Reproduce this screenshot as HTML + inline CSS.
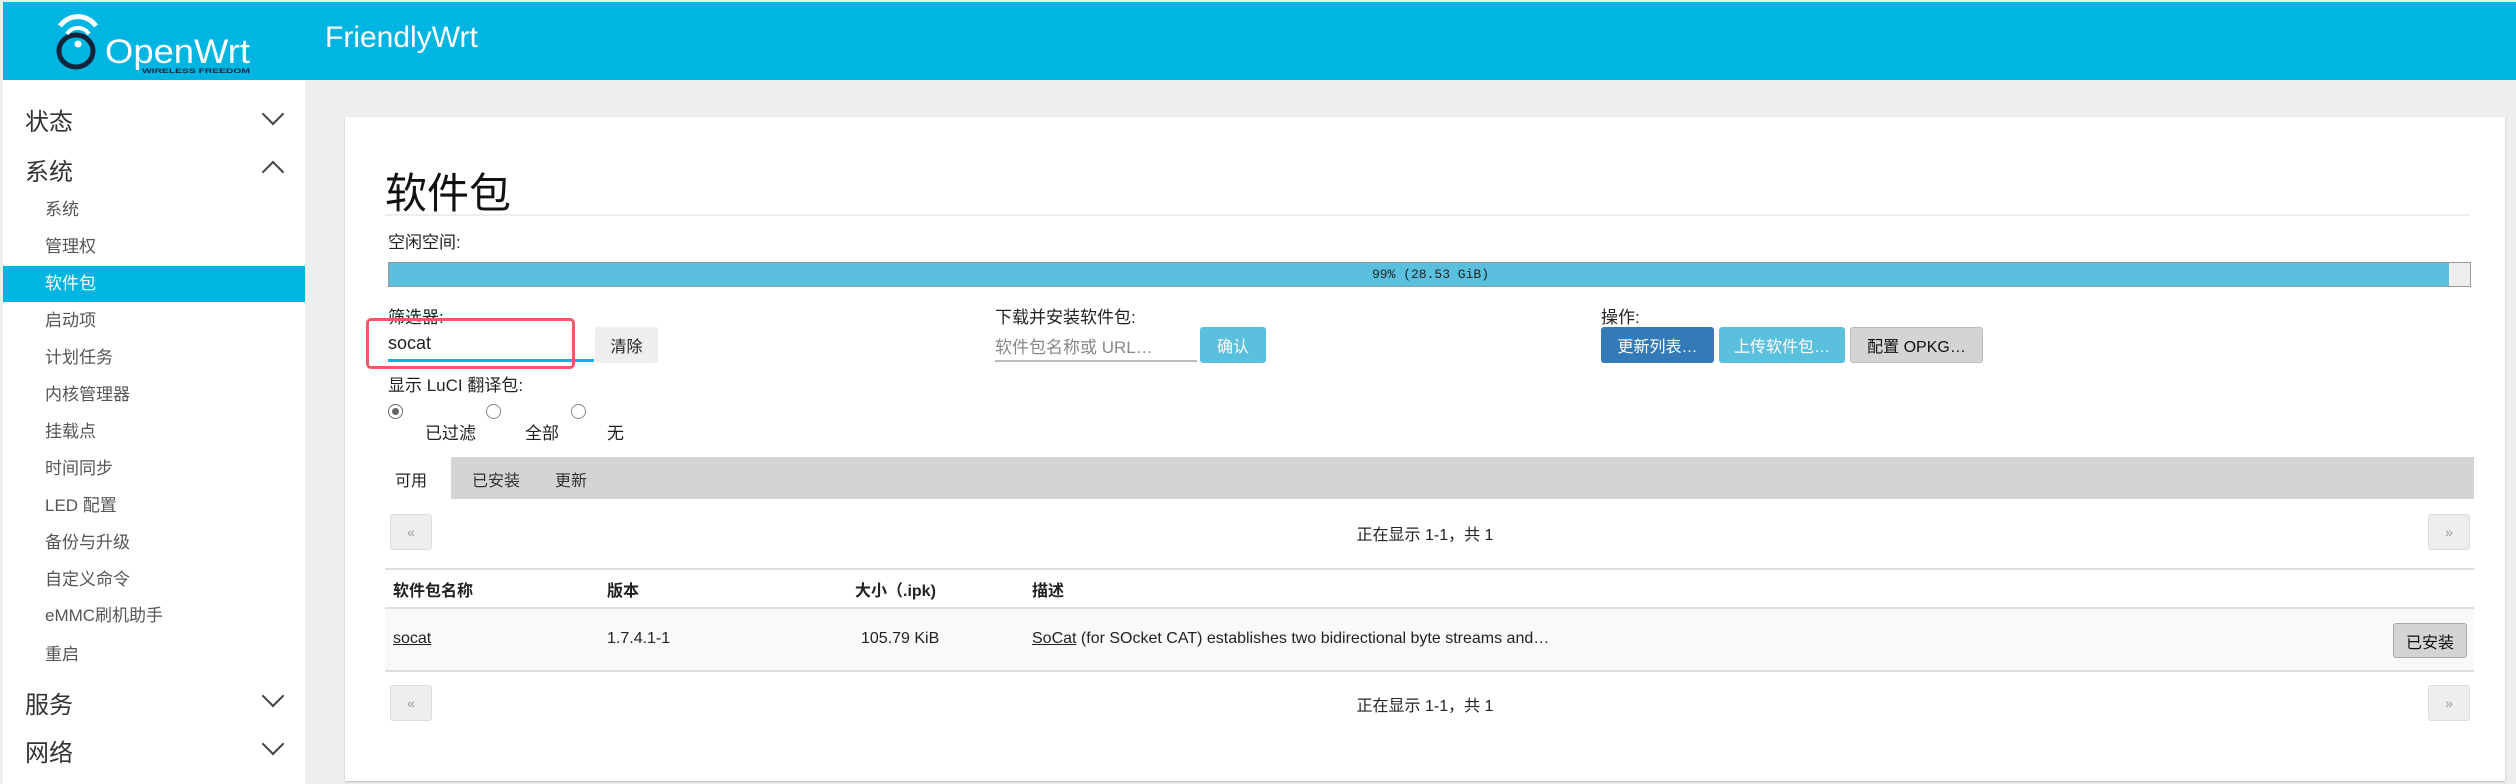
<!DOCTYPE html>
<html><head><meta charset="utf-8"><style>
*{box-sizing:border-box;margin:0;padding:0}
body{width:2516px;height:784px;overflow:hidden;background:#eeeeee;font-family:"Liberation Sans","Noto Sans CJK SC",sans-serif;color:#222;position:relative;font-size:17px}
.abs{position:absolute}
#hdr{left:3px;top:2px;width:2513px;height:78px;background:#00b5e2}
#side{left:3px;top:80px;width:302px;height:704px;background:#fff}
.m{position:absolute;left:22px;font-size:24px;color:#333}
.chev{position:absolute;left:262px;width:16px;height:16px;border-right:2px solid #444;border-bottom:2px solid #444}
.s{position:absolute;left:42px;font-size:17px;color:#555;line-height:20px}
#card{left:345px;top:117px;width:2160px;height:664px;background:#fff;box-shadow:0 1px 2px #bbb}
.lbl{position:absolute;font-size:17px;color:#222}
.btn{position:absolute;font-size:16px;display:flex;align-items:center;justify-content:center;border-radius:3px}
.pg{position:absolute;width:42px;height:36px;background:#eee;border:1px solid #ddd;border-radius:3px;color:#999;font-size:14px;display:flex;align-items:center;justify-content:center}
.radio{position:absolute;width:15px;height:15px;border:1px solid #888;border-radius:50%;background:#fff}
</style></head><body>
<div id="hdr" class="abs">
<svg class="abs" style="left:-3px;top:-2px" width="270" height="80" viewBox="0 0 270 80">
<ellipse cx="76" cy="51" rx="17" ry="16" fill="none" stroke="#13233a" stroke-width="5"/>
<path d="M60 26 A22 22 0 0 1 96 26" fill="none" stroke="#fff" stroke-width="5"/>
<path d="M67 34 A13 13 0 0 1 89 34" fill="none" stroke="#fff" stroke-width="4"/>
<circle cx="78" cy="44" r="3.5" fill="#fff"/>
<text x="105" y="63" font-family="Liberation Sans" font-size="34" fill="#fff" textLength="145" lengthAdjust="spacingAndGlyphs">OpenWrt</text>
<text x="142" y="73" font-family="Liberation Sans" font-size="6.5" font-weight="bold" fill="#13233a" textLength="108" lengthAdjust="spacingAndGlyphs">WIRELESS FREEDOM</text>
</svg>
<div class="abs" style="left:322px;top:19px;font-size:30px;color:#fff">FriendlyWrt</div>
</div>
<div id="side" class="abs">
<div class="m" style="top:22px">状态</div><div class="chev" style="top:26px;transform:rotate(45deg)"></div>
<div class="m" style="top:72px">系统</div><div class="chev" style="top:84px;transform:rotate(-135deg)"></div>
<div class="s" style="top:120px">系统</div>
<div class="s" style="top:157px">管理权</div>
<div class="abs" style="left:0;top:186px;width:302px;height:36px;background:#00b5e2"></div>
<div class="s" style="top:194px;color:#fff">软件包</div>
<div class="s" style="top:231px">启动项</div>
<div class="s" style="top:268px">计划任务</div>
<div class="s" style="top:305px">内核管理器</div>
<div class="s" style="top:342px">挂载点</div>
<div class="s" style="top:379px">时间同步</div>
<div class="s" style="top:416px">LED 配置</div>
<div class="s" style="top:453px">备份与升级</div>
<div class="s" style="top:490px">自定义命令</div>
<div class="s" style="top:526px">eMMC刷机助手</div>
<div class="s" style="top:565px">重启</div>
<div class="m" style="top:605px">服务</div><div class="chev" style="top:608px;transform:rotate(45deg)"></div>
<div class="m" style="top:653px">网络</div><div class="chev" style="top:656px;transform:rotate(45deg)"></div>
</div>
<div id="card" class="abs">
<div class="abs" style="left:40px;top:43px;font-size:42px;color:#111">软件包</div>
<div class="abs" style="left:40px;top:97px;width:2085px;height:2px;background:#eee"></div>
<div class="lbl" style="left:43px;top:111px">空闲空间:</div>
<div class="abs" style="left:43px;top:145px;width:2083px;height:25px;border:1px solid #999;background:#eee">
<div style="width:2060px;height:23px;background:#5bc0de"></div>
<div class="abs" style="left:0;top:0;width:2083px;text-align:center;font-family:'Liberation Mono',monospace;font-size:13px;line-height:23px;color:#222">99% (28.53 GiB)</div></div>
<div class="lbl" style="left:43px;top:186px">筛选器:</div>
<div class="abs" style="left:43px;top:208px;width:206px;height:37px;border-bottom:3px solid #00b5e2;font-size:18px;padding-top:8px">socat</div>
<div class="abs" style="left:21px;top:201px;width:209px;height:51px;border:3px solid #f5566a;border-radius:5px"></div>
<div class="btn" style="left:250px;top:210px;width:63px;height:36px;background:#eee">清除</div>
<div class="lbl" style="left:650px;top:186px">下载并安装软件包:</div>
<div class="abs" style="left:650px;top:208px;width:202px;height:37px;border-bottom:2px solid #bbb;font-size:17px;color:#888;padding-top:8px">软件包名称或 URL…</div>
<div class="btn" style="left:855px;top:210px;width:66px;height:36px;background:#5bc0de;color:#fff">确认</div>
<div class="lbl" style="left:1256px;top:186px">操作:</div>
<div class="btn" style="left:1256px;top:210px;width:113px;height:36px;background:#337ab7;color:#fff">更新列表…</div>
<div class="btn" style="left:1374px;top:210px;width:126px;height:36px;background:#5bc0de;color:#fff">上传软件包…</div>
<div class="btn" style="left:1505px;top:210px;width:133px;height:36px;background:#d4d4d4;border:1px solid #bbb;color:#111">配置 OPKG…</div>
<div class="lbl" style="left:43px;top:254px">显示 LuCI 翻译包:</div>
<div class="radio" style="left:43px;top:287px;border-color:#666"><div style="margin:3px;width:7px;height:7px;border-radius:50%;background:#666"></div></div>
<div class="lbl" style="left:80px;top:302px">已过滤</div>
<div class="radio" style="left:141px;top:287px"></div>
<div class="lbl" style="left:180px;top:302px">全部</div>
<div class="radio" style="left:226px;top:287px"></div>
<div class="lbl" style="left:262px;top:302px">无</div>
<div class="abs" style="left:40px;top:340px;width:2089px;height:42px;background:#d4d4d4"></div>
<div class="abs" style="left:40px;top:340px;width:66px;height:42px;background:#fff"></div>
<div class="lbl" style="left:50px;top:350px;font-size:16px">可用</div>
<div class="lbl" style="left:127px;top:350px;font-size:16px;color:#333">已安装</div>
<div class="lbl" style="left:210px;top:350px;font-size:16px;color:#333">更新</div>
<div class="pg" style="left:45px;top:397px">«</div>
<div class="lbl" style="left:0;width:2160px;text-align:center;top:404px;font-size:16px">正在显示 1-1，共 1</div>
<div class="pg" style="left:2083px;top:397px">»</div>
<div class="abs" style="left:40px;top:451px;width:2089px;height:104px;border-top:2px solid #ddd;border-bottom:2px solid #ddd"></div>
<div class="abs" style="left:40px;top:490px;width:2089px;height:63px;background:#f9f9f9;border-top:2px solid #ddd"></div>
<div class="lbl" style="left:48px;top:460px;font-weight:bold;font-size:16px">软件包名称</div>
<div class="lbl" style="left:262px;top:460px;font-weight:bold;font-size:16px">版本</div>
<div class="lbl" style="left:510px;top:460px;font-weight:bold;font-size:16px">大小（.ipk)</div>
<div class="lbl" style="left:687px;top:460px;font-weight:bold;font-size:16px">描述</div>
<div class="lbl" style="left:48px;top:513px;font-size:16px;text-decoration:underline">socat</div>
<div class="lbl" style="left:262px;top:513px;font-size:16px">1.7.4.1-1</div>
<div class="lbl" style="left:516px;top:513px;font-size:16px">105.79 KiB</div>
<div class="lbl" style="left:687px;top:513px;font-size:16px"><u>SoCat</u> (for SOcket CAT) establishes two bidirectional byte streams and…</div>
<div class="btn" style="left:2048px;top:506px;width:74px;height:35px;background:#d4d4d4;border:1px solid #aaa;color:#111">已安装</div>
<div class="pg" style="left:45px;top:568px">«</div>
<div class="lbl" style="left:0;width:2160px;text-align:center;top:575px;font-size:16px">正在显示 1-1，共 1</div>
<div class="pg" style="left:2083px;top:568px">»</div>
</div>
</body></html>
